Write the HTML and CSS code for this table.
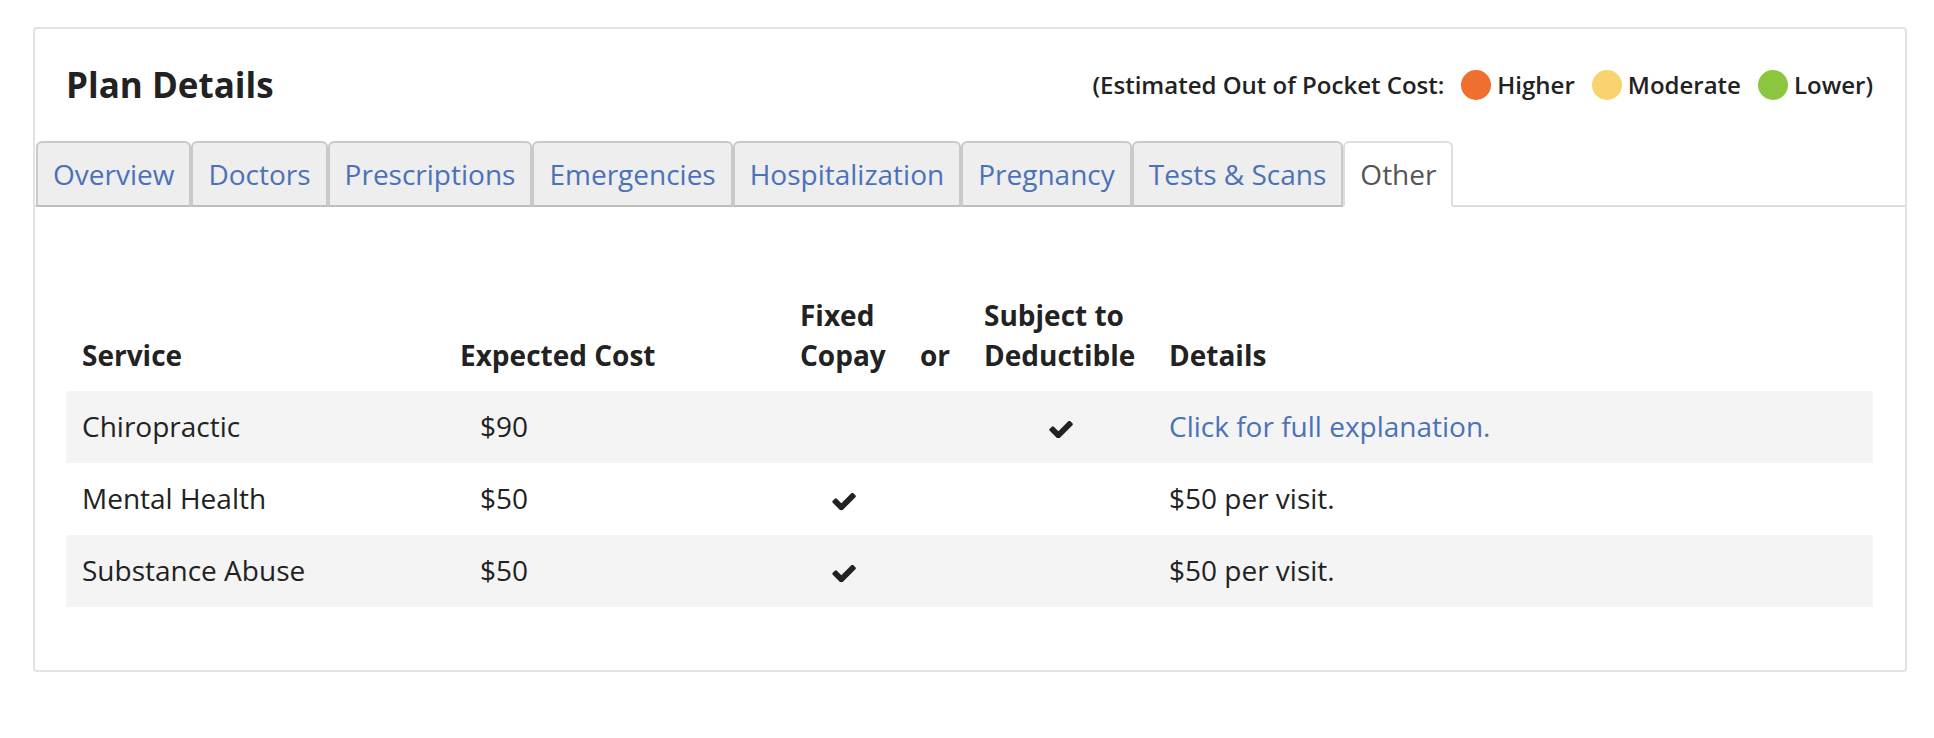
FILE: index.html
```html
<!DOCTYPE html>
<html lang="en">
<head>
<meta charset="utf-8">
<title>Plan Details</title>
<link rel="stylesheet" href="styles.css">
</head>
<body>
<div class="page">
  <section class="panel">
    <header class="panel-head">
      <h2 class="title">Plan Details</h2>
      <div class="legend">
        <span class="legend-label">(Estimated Out of Pocket Cost:</span>
        <span class="legend-item"><span class="dot dot-high"></span>Higher</span>
        <span class="legend-item"><span class="dot dot-mod"></span>Moderate</span>
        <span class="legend-item"><span class="dot dot-low"></span>Lower)</span>
      </div>
    </header>
    <nav class="tabs">
      <a class="tab">Overview</a>
      <a class="tab">Doctors</a>
      <a class="tab">Prescriptions</a>
      <a class="tab">Emergencies</a>
      <a class="tab">Hospitalization</a>
      <a class="tab">Pregnancy</a>
      <a class="tab">Tests &amp; Scans</a>
      <a class="tab tab-active">Other</a>
    </nav>
    <div class="content">
      <table class="services">
        <colgroup>
          <col class="c-service">
          <col class="c-cost">
          <col class="c-copay">
          <col class="c-or">
          <col class="c-ded">
          <col class="c-details">
        </colgroup>
        <thead>
          <tr>
            <th>Service</th>
            <th>Expected Cost</th>
            <th>Fixed Copay</th>
            <th>or</th>
            <th>Subject to Deductible</th>
            <th>Details</th>
          </tr>
        </thead>
        <tbody>
          <tr>
            <td>Chiropractic</td>
            <td class="cost">$90</td>
            <td class="mark"></td>
            <td></td>
            <td class="mark"><svg class="check" viewBox="100 360 1580 1100"><path d="M1671 566q0 40-28 68l-724 724-136 136q-28 28-68 28t-68-28l-136-136-362-362q-28-28-28-68t28-68l136-136q28-28 68-28t68 28l294 295 656-657q28-28 68-28t68 28l136 136q28 28 28 68z"/></svg></td>
            <td><a class="link">Click for full explanation.</a></td>
          </tr>
          <tr>
            <td>Mental Health</td>
            <td class="cost">$50</td>
            <td class="mark"><svg class="check" viewBox="100 360 1580 1100"><path d="M1671 566q0 40-28 68l-724 724-136 136q-28 28-68 28t-68-28l-136-136-362-362q-28-28-28-68t28-68l136-136q28-28 68-28t68 28l294 295 656-657q28-28 68-28t68 28l136 136q28 28 28 68z"/></svg></td>
            <td></td>
            <td class="mark"></td>
            <td>$50 per visit.</td>
          </tr>
          <tr>
            <td>Substance Abuse</td>
            <td class="cost">$50</td>
            <td class="mark"><svg class="check" viewBox="100 360 1580 1100"><path d="M1671 566q0 40-28 68l-724 724-136 136q-28 28-68 28t-68-28l-136-136-362-362q-28-28-28-68t28-68l136-136q28-28 68-28t68 28l294 295 656-657q28-28 68-28t68 28l136 136q28 28 28 68z"/></svg></td>
            <td></td>
            <td class="mark"></td>
            <td>$50 per visit.</td>
          </tr>
        </tbody>
      </table>
    </div>
  </section>
</div>
</body>
</html>
```

FILE: styles.css
```css
* { box-sizing: border-box; }

html, body {
  margin: 0;
  padding: 0;
  background: #ffffff;
}

body {
  font-family: "Open Sans", "Noto Sans", "Liberation Sans", sans-serif;
  color: #222222;
  font-size: 28px;
  line-height: 40px;
}

.page {
  padding: 27px 27px 0 33px;
}

.panel {
  width: 1874px;
  height: 645px;
  border: 2px solid #e2e2e2;
  border-radius: 4px;
  background: #ffffff;
}

.panel-head {
  display: flex;
  align-items: center;
  justify-content: space-between;
  height: 112px;
  padding: 0 32px 0 31px;
}

.title {
  margin: 0;
  font-size: 35px;
  font-weight: 700;
  line-height: 44px;
  color: #222222;
}

.legend {
  display: flex;
  align-items: center;
  font-size: 24px;
  font-weight: 600;
  line-height: 32px;
  color: #222222;
}

.legend-label {
  margin-right: 17px;
}

.legend-item {
  display: flex;
  align-items: center;
  margin-right: 17px;
}

.legend-item:last-child {
  margin-right: 0;
}

.dot {
  display: inline-block;
  flex: 0 0 30px;
  width: 30px;
  height: 30px;
  border-radius: 50%;
  margin-right: 6px;
}

.dot-high { background: #ef6f2e; }
.dot-mod { background: #f8d36e; }
.dot-low { background: #8cc63f; }

.tabs {
  display: flex;
  padding: 0 0 0 1px;
  border-bottom: 2px solid #dddddd;
}

.tab {
  display: block;
  padding: 11px 15px;
  margin-bottom: -2px;
  border: 2px solid #c9c9c9;
  border-bottom-color: #bdbdbd;
  border-radius: 6px 6px 0 0;
  background: #eeeeee;
  color: #4b72b8;
  text-decoration: none;
  white-space: nowrap;
}

.tab-active {
  background: #ffffff;
  border-color: #dedede;
  border-bottom-color: #ffffff;
  color: #555555;
}

.content {
  padding: 72px 32px 0 31px;
}

.services {
  width: 1807px;
  table-layout: fixed;
  border-collapse: collapse;
}

.c-service { width: 378px; }
.c-cost { width: 340px; }
.c-copay { width: 120px; }
.c-or { width: 64px; }
.c-ded { width: 185px; }
.c-details { width: 720px; }

.services th {
  padding: 16px;
  text-align: left;
  vertical-align: bottom;
  font-weight: 700;
}

.services td {
  height: 72px;
  padding: 15px 16px 17px;
  vertical-align: middle;
}

.services tbody tr:nth-child(odd) {
  background: #f4f4f4;
}

.services td.cost {
  padding-left: 36px;
}

.services td.mark {
  text-align: center;
}

.check {
  display: inline-block;
  width: 24px;
  height: 17px;
  vertical-align: -1px;
  fill: #222222;
}

.link {
  color: #4b72b8;
  text-decoration: none;
}
```
